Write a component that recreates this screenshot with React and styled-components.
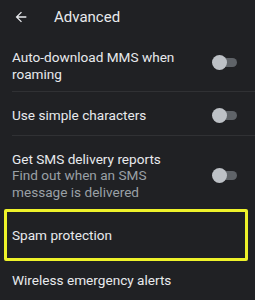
import React from "react"
import styled, {createGlobalStyle} from "styled-components"

const Global = createGlobalStyle`
	html, body {
		margin: 0;
		padding: 0;
		background: #202124;
	}
	body {
		font-family: Roboto, "Noto Sans", Arial, sans-serif;
		-webkit-font-smoothing: antialiased;
	}
`

const settings = [
	{title: "Auto-download MMS when roaming", toggle: true, pad: "14px 0 9px", lift: 3},
	{title: "Use simple characters", toggle: true, pad: "15px 0 11px"},
	{title: "Get SMS delivery reports", sub: "Find out when an SMS message is delivered", toggle: true, pad: "15px 0 6px"},
	{title: "Spam protection", highlight: true, pad: "20px 0 20px"},
	{title: "Wireless emergency alerts", pad: "8px 0 12px"},
]

const App = () => {
	return (
		<>
			<Global/>
			<Screen>
				<Header>
					<Back viewBox="0 0 24 24">
						<path d="M20 11H7.83l5.59-5.59L12 4l-8 8 8 8 1.41-1.41L7.83 13H20v-2z"/>
					</Back>
					<HeaderTitle>Advanced</HeaderTitle>
				</Header>
				<List>
					{settings.map((s, i) => (
						<Row key={i} pad={s.pad} divider={i < 2}>
							{s.highlight && <Highlight/>}
							<Txt>
								<Title>{s.title}</Title>
								{s.sub && <Sub>{s.sub}</Sub>}
							</Txt>
							{s.toggle && (
								<Switch lift={s.lift || 0}>
									<Track/>
									<Thumb/>
								</Switch>
							)}
						</Row>
					))}
				</List>
			</Screen>
		</>
	)
}

export default App

const Screen = styled.div`
	width: 255px;
	height: 300px;
	overflow: hidden;
	background: #202124;
	color: #e8eaed;
`

const Header = styled.header`
	height: 35px;
	display: flex;
	align-items: center;
	padding: 0 0 2px 13px;
	box-sizing: border-box;
`

const Back = styled.svg`
	width: 16px;
	height: 16px;
	fill: #e8eaed;
	margin-right: 25px;
`

const HeaderTitle = styled.h1`
	margin: 0;
	font-size: 15px;
	font-weight: 400;
	color: #e8eaed;
`

const List = styled.div`
	display: flex;
	flex-direction: column;
`

const Row = styled.div`
	position: relative;
	display: flex;
	align-items: center;
	padding: ${props => props.pad};
	margin: 0 0 0 12px;
	padding-right: 18px;
	border-bottom: ${props => props.divider ? "1px solid #303134" : "none"};
`

const Highlight = styled.div`
	position: absolute;
	left: -8px;
	right: 7px;
	top: 2px;
	bottom: 3px;
	border: 3.5px solid #eef22a;
	border-radius: 2px;
`

const Txt = styled.div`
	flex: 1;
	padding-right: 30px;
`

const Title = styled.div`
	font-size: 13.6px;
	line-height: 16.5px;
	color: #e8eaed;
`

const Sub = styled.div`
	font-size: 13.6px;
	line-height: 17px;
	color: #9aa0a6;
`

const Switch = styled.div`
	position: relative;
	width: 25px;
	height: 15px;
	flex: none;
	margin-left: -1px;
	transform: translateY(${props => -props.lift}px);
`

const Track = styled.div`
	position: absolute;
	left: 4px;
	right: 0;
	top: 3px;
	height: 9px;
	border-radius: 5px;
	background: #5f6368;
`

const Thumb = styled.div`
	position: absolute;
	left: 0;
	top: 0;
	width: 15px;
	height: 15px;
	border-radius: 50%;
	background: #bdc1c6;
`
